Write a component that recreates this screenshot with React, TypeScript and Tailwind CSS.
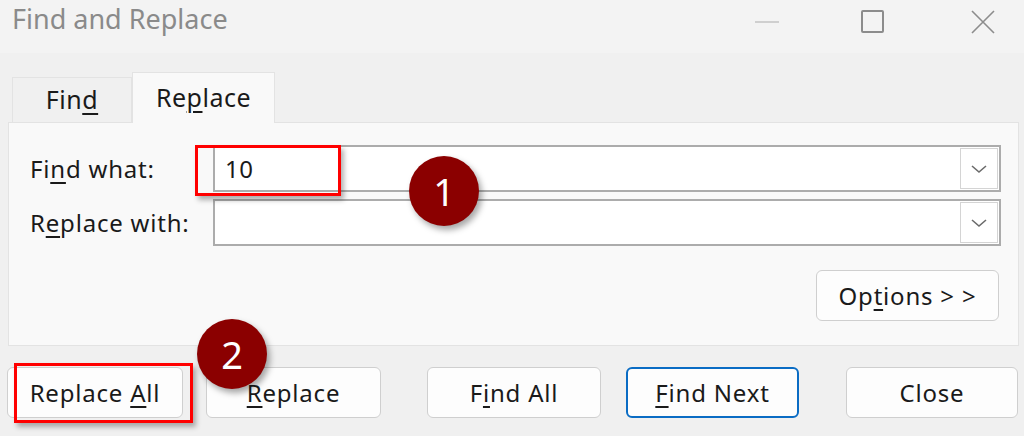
const font = { fontFamily: '"Noto Sans", "Open Sans", sans-serif' };

const U = ({ children }: { children: string }) => (
  <span className="underline decoration-[1.5px] underline-offset-[4px]">{children}</span>
);

const Chevron = () => (
  <svg width="18" height="10" viewBox="0 0 18 10" fill="none">
    <path d="M2 2 L9 8 L16 2" stroke="#6b6b6b" strokeWidth="1.6" />
  </svg>
);

const Combo = ({ value }: { value?: string }) => (
  <div className="flex h-[47px] w-[788px] items-center border-2 border-[#acacac] bg-white pl-[10px] pr-[1px]">
    <span className="flex-1 text-[24px] tracking-[0.5px] text-[#1a1a1a]">{value}</span>
    <div className="flex h-[41px] w-[38px] items-center justify-center border border-[#d4d4d4] bg-white">
      <Chevron />
    </div>
  </div>
);

const Btn = ({
  children,
  w,
  blue,
}: {
  children: React.ReactNode;
  w: string;
  blue?: boolean;
}) => (
  <div
    className={`flex h-[51px] items-center justify-center rounded-[6px] bg-[#fdfdfd] text-[24px] tracking-[0.8px] text-[#1a1a1a] ${w} ${
      blue ? "border-2 border-[#0a6cc4]" : "border border-[#cfcfcf]"
    }`}
  >
    {children}
  </div>
);

const Badge = ({ n, className }: { n: string; className: string }) => (
  <div
    className={`absolute flex h-[70px] w-[70px] items-center justify-center rounded-full bg-[#8b0000] text-[38px] text-white shadow-[3px_4px_6px_rgba(0,0,0,0.35)] ${className}`}
  >
    {n}
  </div>
);

export default function App() {
  return (
    <div className="relative h-[436px] w-[1024px] overflow-hidden bg-[#f0f0f0]" style={font}>
      {/* title bar */}
      <div className="flex h-[53px] items-center bg-[#f3f3f3]">
        <span className="pl-[12px] pb-[14px] text-[27px] text-[#8a8a8a]">Find and Replace</span>
        <div className="ml-auto flex items-center pb-[10px]">
          <div className="mr-[82px] h-[2px] w-[24px] bg-[#cfcfcf]" />
          <div className="mr-[87px] h-[23px] w-[23px] rounded-[2px] border-2 border-[#8c8c8c]" />
          <svg width="24" height="24" viewBox="0 0 24 24" className="mr-[29px]">
            <path d="M1 1 L23 23 M23 1 L1 23" stroke="#8c8c8c" strokeWidth="1.6" />
          </svg>
        </div>
      </div>

      {/* tabs */}
      <div className="flex items-end pl-[12px] pt-[19px] text-[25px] tracking-[0.5px] text-[#1a1a1a]">
        <div className="flex h-[45px] w-[120px] items-center justify-center border border-b-0 border-[#e3e3e3] bg-[#f0f0f0]">
          <span>
            Fin<U>d</U>
          </span>
        </div>
        <div className="-mb-px flex h-[51px] w-[143px] items-center justify-center border border-b-0 border-[#e3e3e3] bg-[#f9f9f9]">
          <span>
            Re<U>p</U>lace
          </span>
        </div>
      </div>

      {/* panel */}
      <div className="ml-[8px] flex h-[224px] w-[1011px] flex-col border border-[#e3e3e3] bg-[#f9f9f9] pt-[22px] pl-[21px] pr-[17px]">
        <div className="flex items-center justify-between">
          <span className="text-[24px] tracking-[0.8px] text-[#1a1a1a]">
            Fi<U>n</U>d what:
          </span>
          <Combo value="10" />
        </div>
        <div className="mt-[7px] flex items-center justify-between">
          <span className="text-[24px] tracking-[0.8px] text-[#1a1a1a]">
            R<U>e</U>place with:
          </span>
          <Combo />
        </div>
        <div className="mt-[24px] flex justify-end pr-[2px]">
          <Btn w="w-[183px]">
            <span>
              Op<U>t</U>ions &gt; &gt;
            </span>
          </Btn>
        </div>
      </div>

      {/* bottom buttons */}
      <div className="mt-[21px] flex pl-[7px]">
        <Btn w="w-[176px]">
          <span>
            Replace <U>A</U>ll
          </span>
        </Btn>
        <div className="ml-[23px]">
          <Btn w="w-[175px]">
            <span>
              <U>R</U>eplace
            </span>
          </Btn>
        </div>
        <div className="ml-[46px]">
          <Btn w="w-[174px]">
            <span>
              F<U>i</U>nd All
            </span>
          </Btn>
        </div>
        <div className="ml-[25px]">
          <Btn w="w-[173px]" blue>
            <span>
              <U>F</U>ind Next
            </span>
          </Btn>
        </div>
        <div className="ml-[47px]">
          <Btn w="w-[172px]">Close</Btn>
        </div>
      </div>

      {/* annotations */}
      <div className="absolute left-[195px] top-[145px] h-[51px] w-[146px] border-[3px] border-[#ff0000] shadow-[3px_4px_5px_rgba(0,0,0,0.3)]" />
      <div className="absolute left-[14px] top-[363px] h-[60px] w-[179px] border-[3px] border-[#ff0000] shadow-[3px_4px_5px_rgba(0,0,0,0.3)]" />
      <Badge n="1" className="left-[409px] top-[156px]" />
      <Badge n="2" className="left-[197px] top-[319px]" />
    </div>
  );
}
